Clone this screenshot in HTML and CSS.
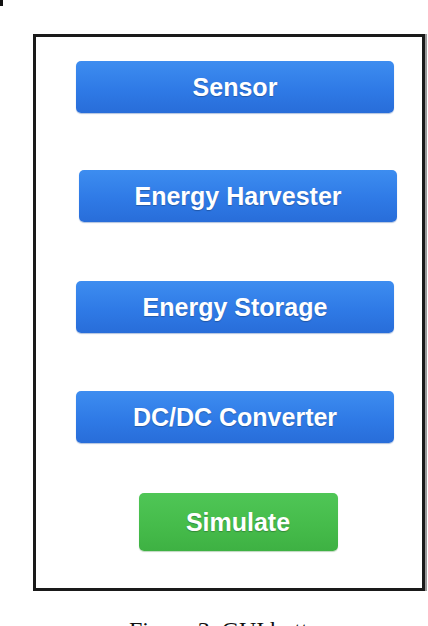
FILE: index.html
```html
<!DOCTYPE html>
<html lang="en">
<head>
    <meta charset="UTF-8">
    <meta name="viewport" content="width=device-width, initial-scale=1.0">
    <title>GUI buttons</title>
    <link rel="stylesheet" href="styles.css">
</head>
<body>
    <div class="corner-mark"></div>

    <div class="panel">
        <div class="button-column">
            <button class="btn btn-blue">Sensor</button>
            <button class="btn btn-blue shift">Energy Harvester</button>
            <button class="btn btn-blue">Energy Storage</button>
            <button class="btn btn-blue">DC/DC Converter</button>
            <button class="btn btn-green">Simulate</button>
        </div>
    </div>

    <p class="caption">Figure 3. GUI buttons</p>
</body>
</html>
```

FILE: styles.css
```css
body {
    margin: 0;
    background: #fff;
    font-family: 'Liberation Sans', Arial, sans-serif;
    overflow: hidden;
}

.corner-mark {
    width: 3px;
    height: 6px;
    background: #111;
}

.panel {
    box-sizing: border-box;
    width: 392px;
    height: 557px;
    margin: 28px 0 0 33px;
    border: 3px solid #1a1a1a;
    box-shadow: 2px 0 0 #9a9a9a;
    padding: 24px 0 0 40px;
}

.button-column {
    width: 324px;
    display: flex;
    flex-direction: column;
    align-items: flex-start;
}

.btn {
    border: none;
    border-radius: 5px;
    color: #fff;
    font-family: 'Liberation Sans', Arial, sans-serif;
    font-size: 25px;
    font-weight: bold;
    text-shadow: 0 1px 1px rgba(0,0,0,0.25);
    cursor: pointer;
    padding: 0;
}

.btn-blue {
    width: 318px;
    height: 52px;
    background: linear-gradient(to bottom, #3d8df0 0%, #2f7ae6 55%, #286dd9 100%);
    box-shadow: 0 1px 1px rgba(30,80,160,0.35);
    margin-bottom: 58px;
}

.btn-blue:nth-child(2) { margin-bottom: 59px; }
.btn-blue:nth-child(1) { margin-bottom: 57px; }
.btn-blue:nth-child(4) { margin-bottom: 50px; }

.shift {
    margin-left: 3px;
}

.btn-green {
    align-self: center;
    width: 199px;
    height: 58px;
    background: linear-gradient(to bottom, #4fc656 0%, #45bb4a 60%, #3eb143 100%);
    box-shadow: 0 1px 1px rgba(40,120,40,0.3);
}

.caption {
    margin: 26px 0 0 129px;
    font-family: 'Liberation Serif', 'Times New Roman', serif;
    font-size: 24px;
    color: #111;
}
```
